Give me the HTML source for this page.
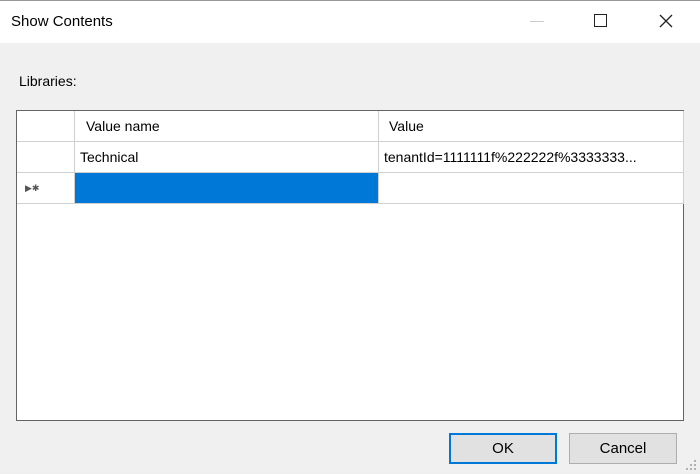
<!DOCTYPE html>
<html><head><style>
body{margin:0;width:700px;height:474px;background:#f0f0f0;font-family:"Liberation Sans",sans-serif;font-size:14px;color:#000;position:relative;overflow:hidden}
.title{position:absolute;left:0;top:0;width:700px;height:43px;background:#fff;border-top:1px solid #999;box-sizing:border-box}
.abs{position:absolute}
.grid{position:absolute;left:16px;top:110px;width:668px;height:311px;border:1px solid #646464;box-sizing:border-box;background:#fff}
.c{position:absolute;border-right:1px solid #d0d0d0;border-bottom:1px solid #d0d0d0;box-sizing:border-box;line-height:30px;white-space:nowrap;overflow:hidden}
.btn{position:absolute;top:433px;width:108px;height:31px;background:#e1e1e1;border:1px solid #adadad;box-sizing:border-box;text-align:center;line-height:29px;font-size:15px}
</style></head><body>
<div class="title">
<div class="abs" style="left:11px;top:12px;font-size:15px">Show Contents</div>
<div class="abs" style="left:530px;top:20px;width:14px;height:1px;background:#ccc"></div>
<div class="abs" style="left:594px;top:13px;width:13px;height:13px;border:1.5px solid #222;box-sizing:border-box"></div>
<svg class="abs" style="left:659px;top:13px" width="14" height="14"><path d="M1 1L13 13M13 1L1 13" stroke="#222" stroke-width="1.3"/></svg>
</div>
<div class="abs" style="left:19px;top:73px">Libraries:</div>
<div class="grid">
<div class="c" style="left:0;top:0;width:58px;height:31px"></div>
<div class="c" style="left:58px;top:0;width:304px;height:31px;padding-left:11px">Value name</div>
<div class="c" style="left:362px;top:0;width:305px;height:31px;padding-left:10px">Value</div>
<div class="c" style="left:0;top:31px;width:58px;height:31px"></div>
<div class="c" style="left:58px;top:31px;width:304px;height:31px;padding-left:5px">Technical</div>
<div class="c" style="left:362px;top:31px;width:305px;height:31px;padding-left:5px">tenantId=1111111f%222222f%3333333...</div>
<div class="c" style="left:0;top:62px;width:58px;height:31px;font-size:9px;color:#555;padding-left:8px">▶✱</div>
<div class="c" style="left:58px;top:62px;width:304px;height:31px;background:#0078d7"></div>
<div class="c" style="left:362px;top:62px;width:305px;height:31px"></div>
</div>
<div class="btn" style="left:449px;border:2px solid #0078d7;line-height:27px">OK</div>
<div class="btn" style="left:569px">Cancel</div>
<svg class="abs" style="left:686px;top:460px" width="12" height="12"><g fill="#b0b0b0"><rect x="8" y="0" width="2" height="2"/><rect x="4" y="4" width="2" height="2"/><rect x="8" y="4" width="2" height="2"/><rect x="0" y="8" width="2" height="2"/><rect x="4" y="8" width="2" height="2"/><rect x="8" y="8" width="2" height="2"/></g></svg>
</body></html>
